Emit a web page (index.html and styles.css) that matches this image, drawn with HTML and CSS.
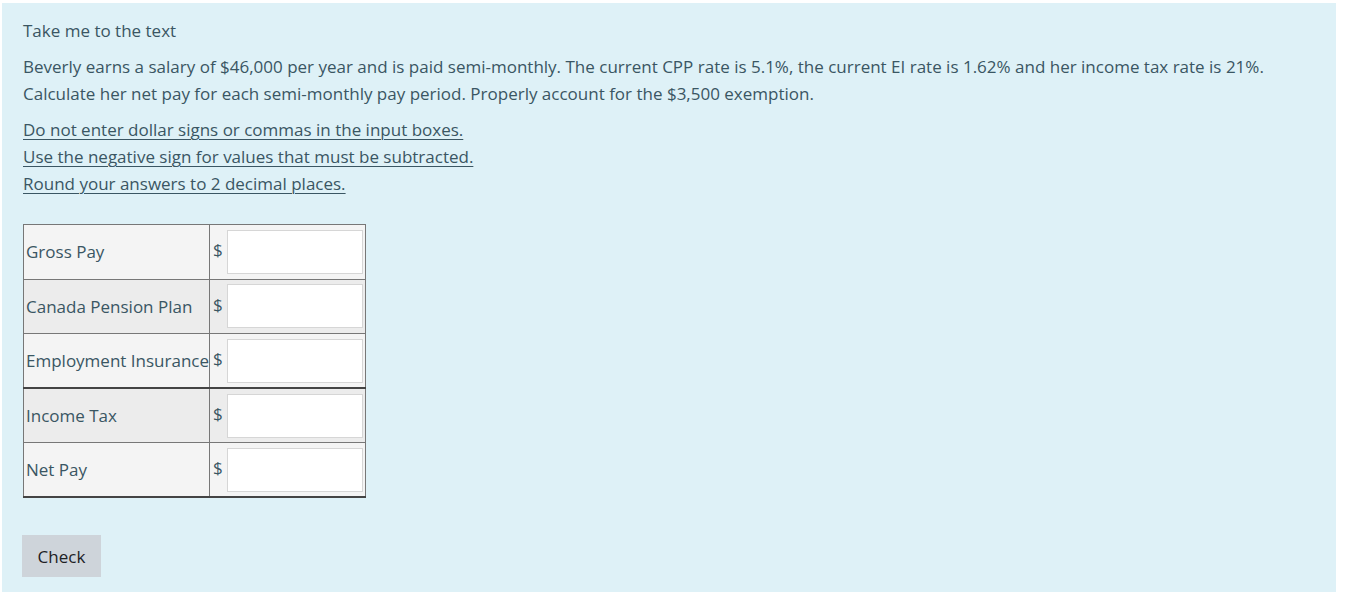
FILE: index.html
```html
<!DOCTYPE html>
<html>
<head>
<meta charset="utf-8">
<link rel="stylesheet" href="styles.css">
</head>
<body>
<div class="panel">
  <p class="take">Take me to the text</p>
  <p class="q">Beverly earns a salary of $46,000 per year and is paid semi-monthly. The current CPP rate is 5.1%, the current EI rate is 1.62% and her income tax rate is 21%.<br>Calculate her net pay for each semi-monthly pay period. Properly account for the $3,500 exemption.</p>
  <p class="notes"><span>Do not enter dollar signs or commas in the input boxes.</span><br><span>Use the negative sign for values that must be subtracted.</span><br><span>Round your answers to 2 decimal places.</span></p>
  <table class="pay">
    <tr class="light"><td class="lbl">Gross Pay</td><td class="dol">$</td><td class="inp"><input type="text"></td></tr>
    <tr class="dark"><td class="lbl">Canada Pension Plan</td><td class="dol">$</td><td class="inp"><input type="text"></td></tr>
    <tr class="light sep"><td class="lbl">Employment Insurance</td><td class="dol">$</td><td class="inp"><input type="text"></td></tr>
    <tr class="dark"><td class="lbl">Income Tax</td><td class="dol">$</td><td class="inp"><input type="text"></td></tr>
    <tr class="light last"><td class="lbl">Net Pay</td><td class="dol">$</td><td class="inp"><input type="text"></td></tr>
  </table>
  <button class="check">Check</button>
</div>
</body>
</html>
```
FILE: styles.css
```css
html, body { margin: 0; padding: 0; background: #fff; }
body { padding: 3px 10px 6px 2px; font-family: "Open Sans", "Noto Sans", sans-serif; color: #3a5663; }
.panel {
  background: #def1f7;
  width: 1334px;
  height: 589px;
  box-sizing: border-box;
  padding: 16px 21px 0 21px;
  font-size: 17px;
}
p { margin: 0; }
.take { line-height: 24px; }
.q { line-height: 27px; margin-top: 10px; }
.notes { line-height: 27px; margin-top: 9px; }
.notes span { text-decoration: underline; text-decoration-thickness: 1px; text-underline-offset: 3px; }
.pay {
  margin-top: 27px;
  border-collapse: collapse;
  border: 1px solid #777;
}
.pay tr { height: 54.6px; }
.pay td { border-top: 1px solid #777; border-bottom: 1px solid #777; padding: 0; vertical-align: middle; }
.pay tr.light td { background: #f4f4f4; }
.pay tr.dark td { background: #ececec; }
.pay tr.sep td { border-bottom: 2px solid #444; }
.pay tr.last td { border-bottom: 2px solid #444; }
.lbl { border-right: 1px solid #777; padding-left: 2px !important; width: 183px; white-space: nowrap; }
.dol { padding-left: 3px !important; padding-bottom: 4px !important; width: 14px; }
.inp { padding: 2px 2px 2px 0 !important; }
.inp input {
  display: block;
  width: 136px;
  height: 44px;
  box-sizing: border-box;
  border: 1px solid #d6d6d6;
  background: #fff;
  margin: 0;
}
.check {
  display: block;
  margin: 37px 0 0 -1px;
  background: #ced4da;
  border: none;
  color: #1d2125;
  font-family: inherit;
  font-size: 17px;
  width: 79px;
  height: 42px;
  padding: 0;
}
```
